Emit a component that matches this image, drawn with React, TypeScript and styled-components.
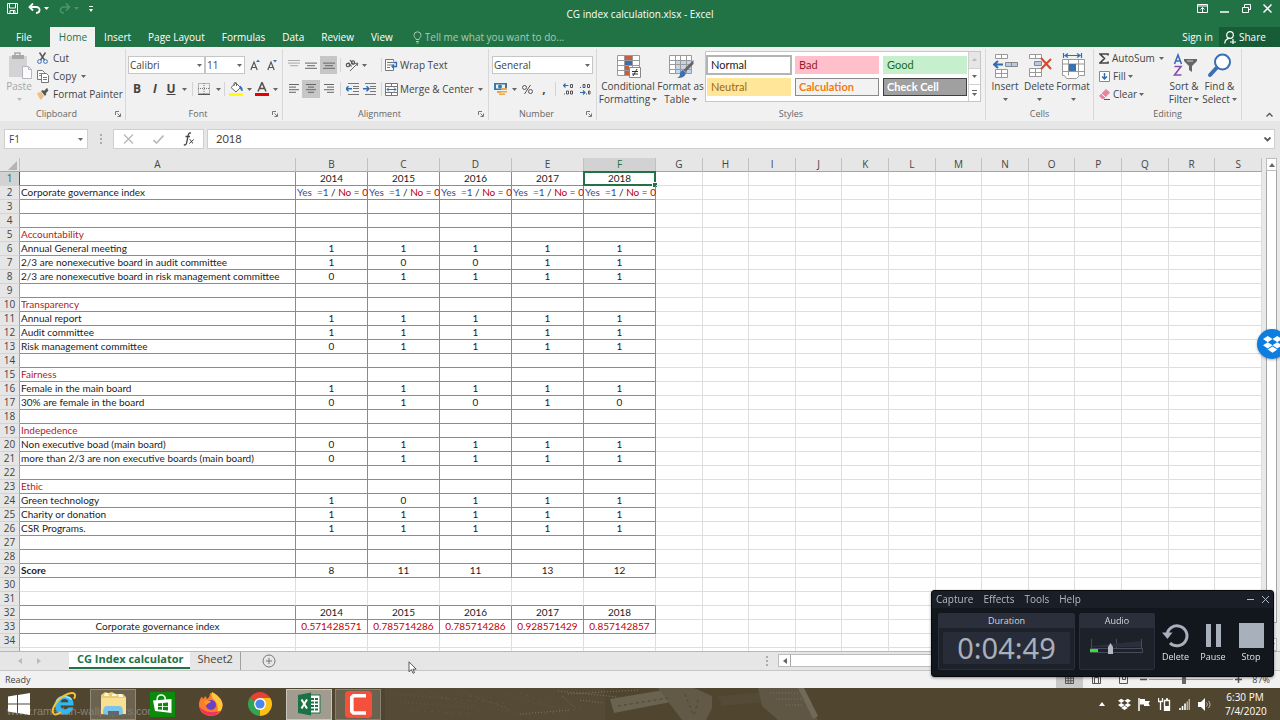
import React from "react";
import styled, { createGlobalStyle, css } from "styled-components";

const ui = `"Open Sans", "Noto Sans", sans-serif`;
const sheetFont = `Lato, "Open Sans", sans-serif`;
const green = "#217346";

const Global = createGlobalStyle`
  * { box-sizing: border-box; }
  body { margin: 0; overflow: hidden; font-family: ${ui}; font-size: 10px; color: #444; background: #e6e6e6; }
  button, input, select { font: inherit; color: inherit; margin: 0; }
  button { border: 0; background: none; padding: 0; white-space: nowrap; }
  a { color: inherit; text-decoration: none; }
  svg { display: block; flex: none; }
`;

const Page = styled.div`
  position: relative;
  display: flex;
  flex-direction: column;
  height: 100vh;
  overflow: hidden;
`;

/* ---------- title bar ---------- */
const TitleBar = styled.header`
  display: grid;
  grid-template-columns: 1fr auto 1fr;
  height: 27px;
  background: ${green};
  color: #fff;
`;
const QuickAccess = styled.div`
  display: flex;
  align-items: center;
  gap: 10px;
  height: 17px;
  padding-left: 6px;
`;
const SplitButton = styled.div`
  display: flex;
  gap: 3px;
`;
const Title = styled.h1`
  margin: 0;
  font-size: 10px;
  font-weight: 400;
  line-height: 28px;
`;
const WindowButtons = styled.div`
  display: flex;
  justify-content: flex-end;
  align-items: center;
  height: 17px;
  padding-right: 2px;
`;
const BarButton = styled.button<{ $w: number }>`
  display: flex;
  align-items: center;
  justify-content: center;
  width: ${(p) => p.$w}px;
  height: 17px;
`;

/* ---------- tabs ---------- */
const Tabs = styled.nav`
  display: flex;
  height: 20px;
  padding-left: 7px;
  background: ${green};
  color: #fff;
  line-height: 20px;
`;
const Tab = styled.a<{ $active?: boolean; $file?: boolean }>`
  padding: 0 8px 0 9px;
  white-space: nowrap;
  ${(p) => p.$file && css`margin-right: 10px;`}
  ${(p) => p.$active && css`background: #f1f1f1; color: ${green};`}
`;
const TellMe = styled.label`
  display: flex;
  align-items: center;
  gap: 3px;
  flex: 1;
  padding-left: 12px;
  color: #a5cbb4;
  input {
    width: 200px;
    border: 0;
    padding: 0;
    background: none;
    outline: 0;
    line-height: 18px;
  }
  input::placeholder { color: #a5cbb4; opacity: 1; }
`;
const SignIn = styled.a`
  padding-right: 6px;
`;
const Share = styled.button`
  display: flex;
  align-items: center;
  gap: 2px;
  width: 61px;
  padding-left: 5px;
  background: #185c37;
  color: #fff;
`;

/* ---------- ribbon ---------- */
const Ribbon = styled.section`
  display: flex;
  height: 74px;
  padding-bottom: 1px;
  background: #f1f1f1;
`;
const GroupBox = styled.div<{ $w: number }>`
  display: flex;
  flex-direction: column;
  flex: none;
  width: ${(p) => p.$w}px;
  margin-top: 2px;
  border-right: 1px solid #d8d8d8;
`;
const GroupBody = styled.div<{ $left: number }>`
  display: flex;
  align-items: flex-start;
  height: 58px;
  padding-left: ${(p) => p.$left}px;
`;
const GroupLabel = styled.div`
  display: flex;
  align-items: center;
  height: 13px;
  font-size: 9px;
  line-height: 13px;
  color: #666;
  span { flex: 1; text-align: center; }
  button { width: 12px; padding-left: 2px; }
`;
const Col = styled.div`
  display: flex;
  flex-direction: column;
  gap: 6px;
  padding-top: 7px;
`;
const List = styled.div<{ $w?: number }>`
  display: flex;
  flex-direction: column;
  ${(p) => p.$w && css`width: ${p.$w}px;`}
`;
const ToolRow = styled.div`
  display: flex;
  align-items: center;
  height: 18px;
`;
const Tool = styled.button<{ $w?: number; $on?: boolean }>`
  display: flex;
  align-items: center;
  justify-content: center;
  height: 18px;
  ${(p) => p.$w && css`width: ${p.$w}px;`}
  ${(p) => p.$on && css`background: #c6c6c6;`}
`;
const Glyph = styled.b`
  font-size: 12px;
  line-height: 16px;
`;
const Sep = styled.i<{ $w: number }>`
  width: ${(p) => p.$w}px;
  height: 14px;
  background: linear-gradient(#d4d4d4, #d4d4d4) center / 1px 100% no-repeat;
`;
const TextTool = styled.button`
  display: flex;
  align-items: center;
  gap: 1px;
  height: 18px;
`;
const Slot = styled.span<{ $w: number }>`
  display: flex;
  justify-content: center;
  width: ${(p) => p.$w}px;
`;
const Big = styled.button<{ $w: number; $dim?: boolean }>`
  display: flex;
  flex-direction: column;
  align-items: center;
  flex: none;
  width: ${(p) => p.$w}px;
  padding-top: 3px;
  line-height: 13px;
  ${(p) => p.$dim && css`color: #a6a6a6;`}
  > svg:first-child { margin-bottom: 1px; }
`;
const BigLine = styled.span`
  display: flex;
  align-items: center;
  gap: 2px;
  height: 13px;
`;
const SelectBox = styled.span<{ $w: number }>`
  display: grid;
  align-items: center;
  width: ${(p) => p.$w}px;
  > * { grid-area: 1 / 1; }
  > svg { justify-self: end; margin-right: 3px; pointer-events: none; }
  select {
    appearance: none;
    width: 100%;
    height: 18px;
    padding: 0 1px;
    border: 1px solid #c6c6c6;
    border-radius: 0;
    background: #fff;
  }
`;
const Gallery = styled.div`
  display: flex;
  justify-content: space-between;
  width: 276px;
  height: 51px;
  margin-top: 2px;
  border: 1px solid #c6c6c6;
  background: #fff;
`;
const Swatches = styled.div`
  display: grid;
  grid-template-columns: repeat(3, 84px);
  grid-auto-rows: 18px;
  gap: 4px;
  padding: 4px 1px;
`;
const Swatch = styled.button<{ $bg: string; $fg: string; $edge?: string; $bold?: boolean; $picked?: boolean }>`
  padding-left: 3px;
  text-align: left;
  font-family: ${sheetFont};
  font-size: 11px;
  line-height: 16px;
  font-weight: ${(p) => (p.$bold ? 700 : 400)};
  background: ${(p) => p.$bg};
  color: ${(p) => p.$fg};
  border: 1px solid ${(p) => p.$edge ?? p.$bg};
  ${(p) => p.$picked && css`outline: 1px solid #b4b4b4; border-color: #b4b4b4;`}
`;
const GalleryScroll = styled.div`
  display: flex;
  flex-direction: column;
  width: 12px;
  border-left: 1px solid #d0d0d0;
  button {
    display: flex;
    align-items: center;
    justify-content: center;
    flex: 1;
  }
  button + button { border-top: 1px solid #d0d0d0; }
  button:first-child { background: #e6e6e6; }
`;
const Collapse = styled.button`
  align-self: flex-end;
  margin: 0 7px 3px auto;
`;

/* ---------- formula bar ---------- */
const FormulaBar = styled.section`
  display: flex;
  align-items: flex-start;
  height: 37px;
  padding: 8px 5px 0 4px;
  background: #e6e6e6;
  font-size: 11px;
`;
const Box = styled.div<{ $w?: number }>`
  display: flex;
  align-items: center;
  height: 20px;
  background: #fff;
  border: 1px solid #cfcfcf;
  ${(p) => (p.$w ? css`flex: none; width: ${p.$w}px;` : css`flex: 1;`)}
  input {
    flex: 1;
    min-width: 0;
    border: 0;
    outline: 0;
    padding: 0;
    background: none;
    line-height: 16px;
  }
`;
const NameBox = styled(Box)`
  padding: 0 4px;
  font-size: 10px;
`;
const FormulaInput = styled(Box)`
  margin-left: 3px;
  padding: 0 3px 0 8px;
  font-family: ${sheetFont};
`;
const Grip = styled.span<{ $w: number }>`
  display: flex;
  justify-content: center;
  align-items: center;
  width: ${(p) => p.$w}px;
  height: 20px;
`;

/* ---------- sheet ---------- */
const SheetArea = styled.main`
  display: flex;
  flex: 1 1 0;
  min-height: 0;
  overflow: hidden;
`;
const Scroller = styled.div`
  flex: 1;
  overflow: hidden;
  background: #fff;
`;
const Grid = styled.table`
  width: 100%;
  table-layout: fixed;
  border-collapse: separate;
  border-spacing: 0;
  font-family: ${sheetFont};
  font-size: 10px;
  color: #1c1c1c;
`;
const ColHead = styled.th<{ $on?: boolean }>`
  height: 14px;
  padding: 0;
  font-family: ${ui};
  font-weight: 400;
  line-height: 13px;
  color: ${(p) => (p.$on ? green : "#444")};
  background: ${(p) => (p.$on ? "#d2d2d2" : "#e6e6e6")};
  border-right: 1px solid #c0c0c0;
  border-bottom: 1px solid #a6a6a6;
  svg { margin: 2px 0 0 8px; }
`;
const RowHead = styled.th<{ $on?: boolean }>`
  height: 14px;
  padding: 0;
  font-family: ${ui};
  font-weight: 400;
  line-height: 13px;
  color: ${(p) => (p.$on ? green : "#444")};
  background: ${(p) => (p.$on ? "#d2d2d2" : "#e6e6e6")};
  border-right: 1px solid ${(p) => (p.$on ? green : "#a0a0a0")};
  border-bottom: 1px solid #d4d4d4;
`;
const Cell = styled.td<{ $right?: boolean; $bottom?: boolean; $left?: boolean; $fg?: string; $bold?: boolean; $on?: boolean }>`
  position: relative;
  height: 14px;
  padding: 0 1px;
  line-height: 13px;
  white-space: pre;
  text-align: ${(p) => (p.$left ? "left" : "center")};
  font-weight: ${(p) => (p.$bold ? 700 : 400)};
  color: ${(p) => p.$fg ?? "inherit"};
  border-right: 1px solid ${(p) => (p.$right ? "#8c8c8c" : "#dedede")};
  border-bottom: 1px solid ${(p) => (p.$bottom ? "#8c8c8c" : "#dedede")};
  ${(p) =>
    p.$on &&
    css`
      &::before {
        content: "";
        position: absolute;
        inset: -1px;
        border: 2px solid ${green};
      }
      &::after {
        content: "";
        position: absolute;
        right: -2px;
        bottom: -2px;
        width: 4px;
        height: 4px;
        background: ${green};
        border: solid #fff;
        border-width: 1px 0 0 1px;
      }
    `}
`;
const Blue = styled.span`color: #2f4f94;`;
const Red = styled.span`color: #c00000;`;
const VScroll = styled.div`
  display: flex;
  flex-direction: column;
  width: 18px;
  padding: 0 3px 0 4px;
  background: #e9e9e9;
  button {
    display: flex;
    align-items: center;
    justify-content: center;
    height: 13px;
    background: #fff;
    border: 1px solid #bcbcbc;
  }
`;
const VThumb = styled.div`
  flex: 1;
  margin-bottom: 15px;
  background: #fff;
  border: 1px solid #a6a6a6;
  border-top: 0;
`;

/* ---------- sheet tabs and status ---------- */
const SheetTabs = styled.nav`
  display: flex;
  flex: none;
  height: 20px;
  background: #e6e6e6;
  border-top: 1px solid #b8b8b8;
  border-bottom: 1px solid #c6c6c6;
  font-size: 11px;
  line-height: 13px;
`;
const SheetNav = styled.div`
  display: flex;
  align-items: center;
  justify-content: center;
  gap: 15px;
  width: 69px;
  height: 17px;
  padding-right: 10px;
`;
const SheetTab = styled.a<{ $active?: boolean }>`
  padding: 0 6px 0 8px;
  height: 17px;
  ${(p) =>
    p.$active &&
    css`
      background: #fff;
      color: ${green};
      font-weight: 700;
      border-bottom: 2px solid ${green};
    `}
`;
const HScroll = styled.div`
  display: flex;
  flex: 0 0 484px;
  height: 13px;
  margin: 2px 18px 0 0;
  background: #fff;
  border: 1px solid #bcbcbc;
  button {
    display: flex;
    align-items: center;
    justify-content: center;
    width: 12px;
    border-right: 1px solid #a6a6a6;
  }
`;
const TabsEnd = styled.div`
  display: flex;
  align-items: center;
  justify-content: space-between;
  flex: 1;
  height: 18px;
  border-left: 1px solid #a0a0a0;
  margin-left: 1px;
  padding: 0 5px 0 21px;
`;
const Status = styled.footer`
  display: flex;
  align-items: center;
  flex: none;
  height: 17px;
  padding: 0 10px 0 5px;
  background: #f1f1f1;
  font-size: 9px;
  > span:first-child { flex: 1; }
`;
const ViewButton = styled.button<{ $on?: boolean }>`
  display: flex;
  align-items: center;
  justify-content: center;
  width: 27px;
  height: 17px;
  background: ${(p) => (p.$on ? "#c9c9c9" : "transparent")};
`;
const Zoom = styled.input`
  appearance: none;
  width: 84px;
  height: 1px;
  background: #a6a6a6;
  &::-webkit-slider-thumb {
    appearance: none;
    width: 4px;
    height: 9px;
    background: #666;
  }
`;
const ZoomLevel = styled.span`
  padding-left: 9px;
`;

/* ---------- taskbar ---------- */
const Taskbar = styled.section`
  position: relative;
  display: flex;
  flex: none;
  align-items: center;
  height: 32px;
  background: #50462f;
  color: #fff;
  overflow: hidden;
`;
const Wallpaper = styled.svg`
  position: absolute;
  left: 340px;
  top: 0;
`;
const Watermark = styled.span`
  position: absolute;
  left: 7px;
  bottom: 2px;
  font-family: "Liberation Sans", sans-serif;
  font-size: 11px;
  line-height: 13px;
  color: #8b8373;
`;
const Apps = styled.div`
  position: relative;
  display: flex;
  gap: 3px;
  flex: 1;
`;
const AppButton = styled.button<{ $state?: "open" | "front" | "faint"; $narrow?: boolean }>`
  display: flex;
  align-items: center;
  justify-content: center;
  width: ${(p) => (p.$narrow ? 38 : 46)}px;
  height: 31px;
  ${(p) => p.$state === "open" && css`background: #7d766699; box-shadow: inset 0 0 0 1px #8f897c;`}
  ${(p) => p.$state === "front" && css`background: #a19c8f; box-shadow: inset 0 0 0 1px #c9c5bc;`}
  ${(p) => p.$state === "faint" && css`background: #6a624f; box-shadow: inset 0 0 0 1px #858071;`}
`;
const Tray = styled.div`
  position: relative;
  display: flex;
  align-items: center;
  padding-right: 15px;
`;
const TrayButton = styled.button<{ $w: number }>`
  display: flex;
  justify-content: center;
  width: ${(p) => p.$w}px;
`;
const Clock = styled.time`
  width: 40px;
  margin-left: 10px;
  font-size: 10px;
  line-height: 14px;
  text-align: center;
  white-space: nowrap;
`;

/* ---------- floating recorder ---------- */
const Recorder = styled.aside`
  position: fixed;
  right: 6px;
  bottom: 43px;
  width: 343px;
  height: 87px;
  border-radius: 3px;
  border: 1px solid #05070a;
  background: linear-gradient(#1a1e27 0 17px, #12161d 17px);
  box-shadow: 0 1px 3px #0006;
  color: #b4bac3;
`;
const RecMenu = styled.div`
  display: flex;
  align-items: center;
  gap: 10px;
  height: 16px;
  padding: 0 4px;
  font-size: 10px;
  line-height: 16px;
`;
const RecWin = styled.div`
  display: flex;
  align-items: center;
  gap: 8px;
  margin-left: auto;
`;
const RecBody = styled.div`
  display: flex;
  padding: 6px 0 0 6px;
`;
const Panel = styled.div<{ $w: number }>`
  width: ${(p) => p.$w}px;
  height: 57px;
  margin-right: 4px;
  background: #1c212a;
  border: 1px solid #2a303b;
  border-radius: 2px;
  h2 {
    margin: 0;
    font-size: 9px;
    font-weight: 400;
    line-height: 14px;
    text-align: center;
    color: #d3d7dc;
    background: #2a2f3b;
  }
  > svg { margin: 11px auto 0; }
`;
const Lcd = styled.div`
  margin: 4px 4px 0;
  height: 32px;
  background: #272c38;
  border-radius: 2px;
  font-size: 29px;
  line-height: 31px;
  text-align: center;
  color: #a7b0bb;
  font-family: "Noto Sans", sans-serif;
`;
const RecButton = styled.button<{ $w: number }>`
  display: flex;
  flex-direction: column;
  align-items: center;
  width: ${(p) => p.$w}px;
  padding-top: 9px;
  font-size: 9px;
  line-height: 12px;
  color: #dfe2e6;
  svg { margin-bottom: 2px; }
`;
const DropboxBadge = styled.button`
  position: fixed;
  right: -7px;
  top: 329px;
  display: flex;
  align-items: center;
  justify-content: center;
  width: 30px;
  height: 30px;
  border-radius: 50%;
  background: #0d7de0;
  box-shadow: 0 1px 3px #0005;
`;
const Pointer = styled.svg`
  position: fixed;
  left: 408px;
  bottom: 46px;
`;

/* ---------- icons ---------- */
type IconProps = { w: number; h: number; box?: string; children: React.ReactNode };
const Icon = ({ w, h, box, children }: IconProps) => (
  <svg width={w} height={h} viewBox={box ?? `0 0 ${w} ${h}`} fill="none" aria-hidden="true">
    {children}
  </svg>
);
const Caret = ({ c = "#666" }: { c?: string }) => (
  <Icon w={5} h={3}><path d="M0 0h5L2.500 3z" fill={c} /></Icon>
);
const Lines = ({ rows }: { rows: [number, number, string?][] }) => (
  <Icon w={12} h={12}>
    {rows.map(([x, w, c], i) => (
      <rect key={i} x={x} y={1 + i * 2.6} width={w} height="1" fill={c ?? "#666"} />
    ))}
  </Icon>
);
const Launcher = () => (
  <button aria-label="More options">
    <Icon w={6} h={6}><path d="M0.500 4V0.500H4M2.500 2.500L5 5M5.500 2.500V5.500H2.500" stroke="#777" /></Icon>
  </button>
);
const Dropbox = ({ s, c = "#fff" }: { s: number; c?: string }) => (
  <Icon w={s} h={s} box="0 0 20 20">
    <path d="M5 1l5 3.300-5 3.300L0 4.300zM15 1l5 3.300-5 3.300-5-3.300zM5 7.600l5 3.300-5 3.300-5-3.300zM15 7.600l5 3.300-5 3.300-5-3.300zM10 12l5 3.300-5 3.300-5-3.300z" fill={c} />
  </Icon>
);
const PasteIcon = () => (
  <Icon w={26} h={27}>
    <path d="M3 4h18v21H3z" fill="#d3d3d5" />
    <path d="M6 3h12v4H6z" fill="#a8a8aa" />
    <path d="M9 1h5v3H9z" stroke="#a8a8aa" strokeWidth="1.500" />
    <path d="M16.500 14.500h6l3 3v9h-9z" fill="#fbfbfd" stroke="#b5b5bb" />
    <path d="M22.500 14.500v3h3" stroke="#b5b5bb" />
  </Icon>
);
const CutIcon = () => (
  <Icon w={11} h={12}>
    <path d="M2.500 0.500L7.500 8M8.500 0.500L3.500 8" stroke="#555" strokeWidth="1.400" />
    <circle cx="2.500" cy="9.500" r="1.900" stroke="#3b6fb6" />
    <circle cx="8.500" cy="9.500" r="1.900" stroke="#3b6fb6" />
  </Icon>
);
const CopyIcon = () => (
  <Icon w={12} h={13}>
    <path d="M.5.500h5l2 2v7h-7z" fill="#fff" stroke="#777" />
    <path d="M2 3.500h3M2 5.500h3" stroke="#6b93c7" />
    <path d="M4.500 3.500h5l2 2v7h-7z" fill="#fff" stroke="#777" />
    <path d="M6 7.500h4M6 9.500h4" stroke="#4a7fc1" />
  </Icon>
);
const PainterIcon = () => (
  <Icon w={12} h={12}>
    <path d="M0 5l4-1 3 4-3 4C2 10 1 8 0 5z" fill="#ecc183" />
    <path d="M4 3l4 5 1.500-2L6 2z" fill="#555" />
    <path d="M7 4l3.500-3.500M8 5l3-3" stroke="#555" strokeWidth="1.500" />
  </Icon>
);
const BordersIcon = () => (
  <Icon w={12} h={12}>
    <path d="M.5.500h11v10H.5zM6 0v11M0 5.500h12" stroke="#777" strokeDasharray="1 1" />
    <path d="M0 11.500h12" stroke="#555" />
  </Icon>
);
const FillColorIcon = () => (
  <Icon w={14} h={14}>
    <path d="M2 5.500L7 1l4.500 4.500L7 10z" fill="#fff" stroke="#666" />
    <path d="M5 4V1.500C5 0 7.500 0 7.500 1.500V4" stroke="#666" />
    <path d="M11 4c2 1 2.500 3 2 5-1-1-1-2-2-3z" fill="#3b6fb6" stroke="#3b6fb6" />
    <path d="M0 11h14v3H0z" fill="#ff0" />
  </Icon>
);
const FontColorIcon = () => (
  <Icon w={14} h={14}>
    <path d="M3 9.500L7 .5l4 9M4.500 6.500h5" stroke="#555" strokeWidth="1.600" />
    <path d="M0 11h14v3H0z" fill="#e80000" />
  </Icon>
);
const GrowA = ({ down }: { down?: boolean }) => (
  <Icon w={11} h={12}>
    <path d="M.8 11L4 3l3.200 8M2 8.500h4" stroke="#555" strokeWidth="1.200" />
    <path d={down ? "M6 1h4L8 3.500z" : "M6 3h4L8 .5z"} fill="#3b6fb6" />
  </Icon>
);
const OrientIcon = () => (
  <Icon w={14} h={13}>
    <path d="M5 12l7.500-7.500M12.800 4l-3 .6M12.800 4l-.6 3" stroke="#666" />
    <circle cx="3" cy="6" r="1.700" stroke="#555" strokeWidth="1.200" />
    <path d="M3.500 3.500l3 4M5 1l3.500 4.500" stroke="#555" strokeWidth="1.200" />
    <circle cx="8" cy="3.500" r="1.600" stroke="#555" strokeWidth="1.200" />
  </Icon>
);
const WrapIcon = () => (
  <Icon w={13} h={13}>
    <path d="M.5.500h8v2M.5.500v11h8v-3" fill="#fff" stroke="#777" />
    <path d="M2 3.500h7M2 6h6M2 8.500h3" stroke="#777" />
    <path d="M9 3.500h2.500v4H7M9 5.500l-2 2 2 2" stroke="#2f6db5" strokeWidth="1.300" />
  </Icon>
);
const MergeIcon = () => (
  <Icon w={13} h={13}>
    <path d="M.5.500h12v12H.5zM.5 3.500h12M.5 9.500h12M6.500 0v3.500M6.500 9.500V13" fill="#fff" stroke="#777" />
    <path d="M2 6.500h9M4 4.500l-2 2 2 2M9 4.500l2 2-2 2" stroke="#2f6db5" />
  </Icon>
);
const IndentIcon = ({ out }: { out?: boolean }) => (
  <Icon w={13} h={12}>
    <path d="M2 .5h11M7 3.500h6M7 5.500h6M7 8.500h6M2 11.500h11" stroke="#777" />
    <path d={out ? "M0 5.800h6M2.500 3.300L0 5.800l2.500 2.500" : "M0 5.800h6M3.500 3.300L6 5.800 3.500 8.300"} stroke="#2f6db5" strokeWidth="1.500" />
  </Icon>
);
const MoneyIcon = () => (
  <Icon w={14} h={12}>
    <path d="M0 0h13v7H0z" fill="#3b77a8" />
    <path d="M2 1.500h9v4H2z" fill="#e8f1f7" />
    <circle cx="6" cy="3.500" r="2" fill="#3b77a8" />
    <path d="M7 5h6v2H7zM7 8h6v1.500H7zM3 8h4v2H3zM5 10.500h6V12H5z" fill="#e9a64c" />
  </Icon>
);
const DecimalIcon = ({ less }: { less?: boolean }) => (
  <Icon w={11} h={12}>
    {less ? (
      <>
        <path d="M0 4.500h1M3 1.500h2v3H3zM7.500 1.500h2v3h-2zM6 11h1M8.500 8h1.500v3H8.500z" stroke="#555" />
        <path d="M0 9.500h5M3 7.500l2 2-2 2" stroke="#2f6db5" strokeWidth="1.200" />
      </>
    ) : (
      <>
        <path d="M7.500 1.500h2v3h-2zM1 11h1M3.500 8h2v3h-2zM7.500 8h2v3h-2z" stroke="#555" />
        <path d="M0 2.500h5.500M2.500.5l-2 2 2 2" stroke="#2f6db5" strokeWidth="1.200" />
      </>
    )}
  </Icon>
);
const CondIcon = () => (
  <Icon w={27} h={27}>
    <path d="M2.500 3.500h22v20h-22zM2 8.500h23M2 13.500h23M2 18.500h23M9.500 3v21M17.500 3v21" fill="#fff" stroke="#9a9a9a" />
    <path d="M10 4h4v4h-4zM10 14h4v4h-4zM10 19h4v4h-4z" fill="#cf5b3c" />
    <path d="M13 4h4v4h-4z" fill="#cf5b3c" />
    <path d="M10 9h7v4h-7z" fill="#3a70b2" />
    <path d="M14.500 15.500h11v10h-11z" fill="#fff" stroke="#888" />
    <path d="M17 19.500h6M17 22h6M22 17l-4 7" stroke="#333" />
  </Icon>
);
const TableIcon = () => (
  <Icon w={27} h={27}>
    <path d="M2.500 3.500h22v18h-22z" fill="#fff" stroke="#9a9a9a" />
    <path d="M8 8h16v13H8z" fill="#c4d4ea" />
    <path d="M2 8.500h23M2 12.500h23M2 17.500h23M8.500 3v19M13.500 3v19M19.500 3v19" stroke="#9a9a9a" />
    <path d="M26.500 8v4l-8 8-2-2z" fill="#666" />
    <path d="M16 18l3 3c-1 4-4 5-9 5 2-1 3-2 3-4s1-3 3-4z" fill="#3a70b2" />
  </Icon>
);
const InsertIcon = () => (
  <Icon w={25} h={27}>
    <path d="M2.500 2.500h12v4h-12zM8.500 2.500v4M2.500 17.500h12v8h-12zM2.500 21.500h12M8.500 17.500v8" fill="#fff" stroke="#999" />
    <path d="M12.500 10.500h12v4h-12zM18.500 10.500v4" fill="#b9cbe4" stroke="#888" />
    <path d="M1 12.500h9M5 9l-4 3.500L5 16" stroke="#2f6db5" strokeWidth="2" />
  </Icon>
);
const DeleteIcon = () => (
  <Icon w={25} h={27}>
    <path d="M2.500 2.500h12v4h-12zM8.500 2.500v4M2.500 16.500h12v8h-12zM2.500 20.500h12M8.500 16.500v8" fill="#fff" stroke="#999" />
    <path d="M7.500 9.500h7v4h-7z" fill="#b9cbe4" stroke="#888" />
    <path d="M14 6l10 11M24 7L14 17" stroke="#cf4b2c" strokeWidth="2" />
  </Icon>
);
const FormatIcon = () => (
  <Icon w={25} h={27}>
    <path d="M2.500 1v5M20.500 1v5M4 3.500h15M7 1.500l-3 2 3 2M16 1.500l3 2-3 2" stroke="#2f6db5" strokeWidth="1.200" />
    <path d="M1.500 7.500h22v16h-5l-3 3H5.500l-2-3h-2zM1.500 12h22M1.500 19.500h22M7.500 7.500v16M17.500 7.500v16" fill="#fff" stroke="#999" />
    <path d="M8 12h7v7H8z" fill="#3a70b2" />
  </Icon>
);
const SigmaIcon = () => (
  <Icon w={10} h={11}><path d="M9 2.500V1H1l4.500 4.500L1 10h8V8.500" stroke="#444" strokeWidth="1.600" /></Icon>
);
const FillIcon = () => (
  <Icon w={11} h={11}>
    <path d="M.5.500h10v10H.5z" fill="#fff" stroke="#888" />
    <path d="M5.500 2v6M3 5.500L5.500 8 8 5.500" stroke="#2f6db5" strokeWidth="1.500" />
  </Icon>
);
const EraserIcon = () => (
  <Icon w={12} h={11}>
    <path d="M0 7l7-7 4 3.500-6 6.500H3z" fill="#e8849b" />
    <path d="M2.500 4.800l4 3.500" stroke="#fff" />
    <path d="M5 10.500h6" stroke="#555" />
  </Icon>
);
const SortIcon = () => (
  <Icon w={25} h={27}>
    <path d="M2.500 12L6 3l3.500 9M3.500 9h5" stroke="#3a6db5" strokeWidth="1.600" />
    <path d="M2.500 14.500h6.500L2.500 23H9.500" stroke="#8a4bb0" strokeWidth="1.600" />
    <path d="M12 7h13v2l-5 5v6l-3-2v-4l-5-5z" fill="#666" />
    <path d="M15 9h6" stroke="#ccc" />
  </Icon>
);
const FindIcon = () => (
  <Icon w={25} h={27}>
    <path d="M9.500 16L3 23" stroke="#3a70b2" strokeWidth="4" strokeLinecap="round" />
    <circle cx="15.500" cy="10" r="7.500" fill="#fff" stroke="#3a70b2" strokeWidth="2" />
  </Icon>
);

/* ---------- taskbar drawings ---------- */
const WindowsLogo = () => (
  <Icon w={24} h={24}><path d="M1 4.500L10 3v8.500H1zM11 2.900L23 1v10.500H11zM1 12.500h9V21l-9-1.500zM11 12.500h12V23l-12-1.900z" fill="#fff" /></Icon>
);
const IELogo = () => (
  <Icon w={26} h={26}>
    <path d="M22.500 14.500H9.500c.3 2.500 2 3.800 4.300 3.800 1.800 0 3-.7 3.600-1.800h5C21 20.800 17.800 23.500 13.500 23.500 7.500 23.500 4 19.500 4 14 4 8.300 8 4.500 13.500 4.500c6 0 9.600 4 9 10zM9.500 11.200h8c-.2-2-1.700-3.300-4-3.300s-3.700 1.300-4 3.300z" fill="#35b6ee" />
    <path d="M5 12c1-4 4.500-6.300 8.500-6.300 3 0 5.500 1.200 7 3" stroke="#a8e4fb" strokeWidth="1.200" />
    <path d="M3 23c-3-2.500-.5-9 5-14.500C14 3 21.500.5 23.500 2.800c1 1.200.5 3.200-.5 5" stroke="#f2c230" strokeWidth="2" />
    <path d="M3 23c1.500 1 4.500-.2 7-2" stroke="#f2c230" strokeWidth="2" />
  </Icon>
);
const ExplorerLogo = () => (
  <Icon w={28} h={26}>
    <path d="M2 4l4-3 3 1 4-1 4 2h7l3 3v17H2z" fill="#eecb6b" />
    <path d="M6 2h3l1 3H5zM13 3h4l1 2h-5zM19 3h4l1 3h-4z" fill="#f7f7f0" />
    <path d="M2 7h25v16H2z" fill="#f8df92" />
    <path d="M4 23c0-6 1-8 4-8h12c3 0 4 2 4 8l-4 1v-4H9v4z" fill="#7cc4ea" />
    <path d="M9 20h11v5H9z" fill="#5a6a70" />
  </Icon>
);
const StoreLogo = () => (
  <Icon w={25} h={25}>
    <path d="M0 0h25v25H0z" fill="#0b8a0b" />
    <path d="M3 8.500L21.500 7v14L5 19z" fill="#fff" />
    <path d="M7 8.500C6.500 4 9.500 2.500 12 3s3.500 2 3.200 5" stroke="#fff" strokeWidth="1.500" />
    <path d="M8 11.500l4-.4v3H8zM13 11l5-.4V14h-5zM8 14.800h4v3l-4-.4zM13 14.800h5v3.700l-5-.5z" fill="#0b8a0b" />
  </Icon>
);
const FirefoxLogo = () => (
  <Icon w={26} h={26}>
    <path d="M13 25C6 25 1 20 1 13.500c0-3 1-6 3-8L5 8l2.500-3L9 8c2-1 3-4 3-6 5 1 8 3 9 6l1-1c2 3 3 5.500 2.500 8C24 21 19 25 13 25z" fill="#ff7a2b" />
    <path d="M14 1c5 2 11 8 10.500 14-.4 4-3 7-6 8.500C22 17 18 10 15 8c-1.500-2-2-4.500-1-7z" fill="#ffc83a" />
    <path d="M1.500 16c1.500 5 6 8.500 11 8.800 4 .2 8-2 10-5-5 2-14 3-21-3.800z" fill="#f2335b" />
    <circle cx="13" cy="14" r="5" fill="#6a42c8" />
    <path d="M6 10c3-1.500 5 0 7 .5-1 2-4 1.500-4 3.500-2-.5-3-2-3-4z" fill="#ff9a30" />
  </Icon>
);
const ChromeLogo = () => (
  <Icon w={26} h={26} box="0 0 48 48">
    <path d="M24 24L4.900 13A22 22 0 0 1 43 13z" fill="#e94235" />
    <path d="M24 24l19.100-11A22 22 0 0 1 24 46z" fill="#fbc116" />
    <path d="M24 24v22A22 22 0 0 1 4.900 13z" fill="#34a353" />
    <path d="M24 13h19L33.500 29.500zM24 24L33.500 29.500 24 46z" fill="#fbc116" />
    <path d="M4.900 13l9.600 16.500L24 24zM24 35l-9.500-5.500L24 46z" fill="#34a353" />
    <circle cx="24" cy="24" r="11" fill="#fff" />
    <circle cx="24" cy="24" r="8.500" fill="#4a86ee" />
  </Icon>
);
const ExcelLogo = () => (
  <Icon w={26} h={26}>
    <path d="M13 4h11v18H13z" fill="#fff" stroke="#1d7245" />
    <path d="M15 7h3v2h-3zM19 7h3v2h-3zM15 10.500h3v2h-3zM19 10.500h3v2h-3zM15 14h3v2h-3zM19 14h3v2h-3zM15 17.500h3v2h-3zM19 17.500h3v2h-3z" fill="#1d7245" />
    <path d="M2 4l13-2.500v23L2 22z" fill="#1d7245" />
    <path d="M5.500 8.500l5.500 9M11 8.500l-5.500 9" stroke="#fff" strokeWidth="2" />
  </Icon>
);
const CamtasiaLogo = () => (
  <Icon w={27} h={27}>
    <rect x="0" y="0" width="27" height="27" rx="4" fill="#f4503c" />
    <path d="M21 4.800H8.500L6.800 6.500v13.800L8.500 22H21" stroke="#fff" strokeWidth="3.600" />
  </Icon>
);

/* ---------- data ---------- */
type Row = { a?: string; kind?: "head" | "bold" | "mid"; v?: string[]; tone?: "yesno" | "red" };
const years = ["2014", "2015", "2016", "2017", "2018"];
const n = (s: string) => s.split(" ");
const rows: Row[] = [
  { v: years },
  { a: "Corporate governance index", tone: "yesno" },
  {},
  {},
  { a: "Accountability", kind: "head" },
  { a: "Annual General meeting", v: n("1 1 1 1 1") },
  { a: "2/3 are nonexecutive board in audit committee", v: n("1 0 0 1 1") },
  { a: "2/3 are nonexecutive board in risk management committee", v: n("0 1 1 1 1") },
  {},
  { a: "Transparency", kind: "head" },
  { a: "Annual report", v: n("1 1 1 1 1") },
  { a: "Audit committee", v: n("1 1 1 1 1") },
  { a: "Risk management committee", v: n("0 1 1 1 1") },
  {},
  { a: "Fairness", kind: "head" },
  { a: "Female in the main board", v: n("1 1 1 1 1") },
  { a: "30% are female in the board", v: n("0 1 0 1 0") },
  {},
  { a: "Indepedence", kind: "head" },
  { a: "Non executive boad (main board)", v: n("0 1 1 1 1") },
  { a: "more than 2/3 are non executive boards (main board)", v: n("0 1 1 1 1") },
  {},
  { a: "Ethic", kind: "head" },
  { a: "Green technology", v: n("1 0 1 1 1") },
  { a: "Charity or donation", v: n("1 1 1 1 1") },
  { a: "CSR Programs.", v: n("1 1 1 1 1") },
  {},
  {},
  { a: "Score", kind: "bold", v: n("8 11 11 13 12") },
  {},
  {},
  { v: years },
  { a: "Corporate governance index", kind: "mid", tone: "red", v: n("0.571428571 0.785714286 0.785714286 0.928571429 0.857142857") },
  {},
];
const restCols = "GHIJKLMNOPQRS".split("");

const WideCol = styled.col`width: 276px;`;
const YearCol = styled.col`width: 72px;`;
const HeadCol = styled.col`width: 20px;`;

const Group = ({ w, left, label, launcher, children }: { w: number; left: number; label: string; launcher?: boolean; children: React.ReactNode }) => (
  <GroupBox $w={w}>
    <GroupBody $left={left}>{children}</GroupBody>
    <GroupLabel><span>{label}</span>{launcher && <Launcher />}</GroupLabel>
  </GroupBox>
);

const Sheet = () => (
  <Grid>
    <colgroup>
      <HeadCol />
      <WideCol />
      {years.map((y) => <YearCol key={y} />)}
      {restCols.map((c) => <col key={c} />)}
    </colgroup>
    <thead>
      <tr>
        <ColHead><Icon w={9} h={9}><path d="M9 0v9H0z" fill="#b4b4b4" /></Icon></ColHead>
        {[..."ABCDEF", ...restCols].map((c) => <ColHead key={c} scope="col" $on={c === "F"}>{c}</ColHead>)}
      </tr>
    </thead>
    <tbody>
      {rows.map((r, i) => {
        const boxed = i < 29 || i === 31 || i === 32;
        const under = boxed || i === 30;
        return (
          <tr key={i}>
            <RowHead scope="row" $on={i === 0}>{i + 1}</RowHead>
            <Cell $left={r.kind !== "mid"} $right={boxed} $bottom={under} $bold={r.kind === "bold"} $fg={r.kind === "head" ? "#b3202a" : undefined}>{r.a}</Cell>
            {years.map((y, k) => (
              <Cell key={y} $right={boxed} $bottom={under} $on={i === 0 && k === 4} $fg={r.tone === "red" ? "#c00000" : undefined}>
                {r.tone === "yesno" ? <><Blue>Yes  =1</Blue> / <Red>No = 0</Red></> : r.v?.[k]}
              </Cell>
            ))}
            {restCols.map((c) => <Cell key={c} />)}
          </tr>
        );
      })}
      <tr>
        <RowHead />
        <Cell />
        {years.map((y) => <Cell key={y} />)}
        {restCols.map((c) => <Cell key={c} />)}
      </tr>
    </tbody>
  </Grid>
);

const RibbonBar = () => (
  <Ribbon>
    <Group w={126} left={5} label="Clipboard" launcher>
      <Big $w={28} $dim><PasteIcon /><BigLine>Paste</BigLine><BigLine><Caret c="#bbb" /></BigLine></Big>
      <List>
        <TextTool><Slot $w={19}><CutIcon /></Slot>Cut</TextTool>
        <TextTool><Slot $w={19}><CopyIcon /></Slot>Copy<Slot $w={12}><Caret /></Slot></TextTool>
        <TextTool><Slot $w={19}><PainterIcon /></Slot>Format Painter</TextTool>
      </List>
    </Group>
    <Group w={157} left={2} label="Font" launcher>
      <Col>
        <ToolRow>
          <SelectBox $w={77}><select aria-label="Font"><option>Calibri</option></select><Caret /></SelectBox>
          <SelectBox $w={40}><select aria-label="Font size"><option>11</option></select><Caret /></SelectBox>
          <Tool $w={20} aria-label="Increase font size"><GrowA /></Tool>
          <Tool $w={14} aria-label="Decrease font size"><GrowA down /></Tool>
        </ToolRow>
        <ToolRow>
          <Tool $w={18}><Glyph>B</Glyph></Tool>
          <Tool $w={18}><Glyph><i>I</i></Glyph></Tool>
          <Tool $w={14}><Glyph><u>U</u></Glyph></Tool>
          <Tool $w={12} aria-label="Underline styles"><Caret /></Tool>
          <Sep $w={4} />
          <Tool $w={20} aria-label="Borders"><BordersIcon /></Tool>
          <Tool $w={8} aria-label="Border styles"><Caret /></Tool>
          <Sep $w={4} />
          <Tool $w={20} aria-label="Fill color"><FillColorIcon /></Tool>
          <Tool $w={6} aria-label="Fill colors"><Caret /></Tool>
          <Tool $w={20} aria-label="Font color"><FontColorIcon /></Tool>
          <Tool $w={6} aria-label="Font colors"><Caret /></Tool>
        </ToolRow>
      </Col>
    </Group>
    <Group w={206} left={2} label="Alignment" launcher>
      <Col>
        <ToolRow>
          <Tool $w={17} aria-label="Top align"><Lines rows={[[0, 12, "#aaa"], [0, 12, "#aaa"], [2, 8, "#aaa"]]} /></Tool>
          <Tool $w={18} aria-label="Middle align"><Lines rows={[[0, 0], [0, 12], [2, 8], [0, 12]]} /></Tool>
          <Tool $w={17} $on aria-label="Bottom align"><Lines rows={[[0, 0], [0, 12], [2, 8], [0, 12]]} /></Tool>
          <Sep $w={6} />
          <Tool $w={18} aria-label="Orientation"><OrientIcon /></Tool>
          <Tool $w={6} aria-label="Orientations"><Caret /></Tool>
        </ToolRow>
        <ToolRow>
          <Tool $w={17} aria-label="Align left"><Lines rows={[[1, 10], [1, 7], [1, 10], [1, 7]]} /></Tool>
          <Tool $w={18} $on aria-label="Center"><Lines rows={[[1, 10], [3, 6], [1, 10], [3, 6]]} /></Tool>
          <Tool $w={17} aria-label="Align right"><Lines rows={[[1, 10], [4, 7], [1, 10], [4, 7]]} /></Tool>
          <Sep $w={6} />
          <Tool $w={18} aria-label="Decrease indent"><IndentIcon out /></Tool>
          <Tool $w={17} aria-label="Increase indent"><IndentIcon /></Tool>
        </ToolRow>
      </Col>
      <Col>
        <ToolRow><Sep $w={6} /><TextTool><Slot $w={15}><WrapIcon /></Slot>Wrap Text</TextTool></ToolRow>
        <ToolRow><Sep $w={6} /><TextTool><Slot $w={15}><MergeIcon /></Slot>Merge &amp; Center<Slot $w={12}><Caret /></Slot></TextTool></ToolRow>
      </Col>
    </Group>
    <Group w={108} left={3} label="Number" launcher>
      <Col>
        <ToolRow>
          <SelectBox $w={101}><select aria-label="Number format"><option>General</option></select><Caret /></SelectBox>
        </ToolRow>
        <ToolRow>
          <Tool $w={18} aria-label="Accounting format"><MoneyIcon /></Tool>
          <Tool $w={8} aria-label="Accounting formats"><Caret /></Tool>
          <Tool $w={18} aria-label="Percent style"><Icon w={11} h={9}><circle cx="2.500" cy="2.500" r="2" stroke="#555" /><circle cx="8.500" cy="6.500" r="2" stroke="#555" /><path d="M8.500 0L2.500 9" stroke="#555" /></Icon></Tool>
          <Tool $w={16}><Glyph>,</Glyph></Tool>
          <Sep $w={6} />
          <Tool $w={20} aria-label="Increase decimal"><DecimalIcon /></Tool>
          <Tool $w={15} aria-label="Decrease decimal"><DecimalIcon less /></Tool>
        </ToolRow>
      </Col>
    </Group>
    <Group w={389} left={3} label="Styles">
      <Big $w={56}><CondIcon /><BigLine>Conditional</BigLine><BigLine>Formatting<Caret /></BigLine></Big>
      <Big $w={49}><TableIcon /><BigLine>Format as</BigLine><BigLine>Table<Caret /></BigLine></Big>
      <Gallery>
        <Swatches>
          <Swatch $bg="#ffffff" $fg="#222" $picked>Normal</Swatch>
          <Swatch $bg="#ffc0cb" $fg="#9c1a2a">Bad</Swatch>
          <Swatch $bg="#c6efce" $fg="#1a6b22">Good</Swatch>
          <Swatch $bg="#ffe699" $fg="#9c6a10">Neutral</Swatch>
          <Swatch $bg="#f2f2f2" $fg="#f07d10" $edge="#8a8a8a" $bold>Calculation</Swatch>
          <Swatch $bg="#a0a0a0" $fg="#ffffff" $edge="#404040" $bold>Check Cell</Swatch>
        </Swatches>
        <GalleryScroll>
          <button aria-label="Previous styles"><Icon w={5} h={3}><path d="M0 3h5L2.500 0z" fill="#bbb" /></Icon></button>
          <button aria-label="Next styles"><Caret /></button>
          <button aria-label="All styles"><Icon w={5} h={6}><path d="M0 .5h5" stroke="#666" /><path d="M0 3h5L2.500 6z" fill="#666" /></Icon></button>
        </GalleryScroll>
      </Gallery>
    </Group>
    <Group w={108} left={2} label="Cells">
      <Big $w={34}><InsertIcon /><BigLine>Insert</BigLine><BigLine><Caret /></BigLine></Big>
      <Big $w={34}><DeleteIcon /><BigLine>Delete</BigLine><BigLine><Caret /></BigLine></Big>
      <Big $w={34}><FormatIcon /><BigLine>Format</BigLine><BigLine><Caret /></BigLine></Big>
    </Group>
    <Group w={148} left={3} label="Editing">
      <List $w={70}>
        <TextTool><Slot $w={15}><SigmaIcon /></Slot>AutoSum<Slot $w={12}><Caret /></Slot></TextTool>
        <TextTool><Slot $w={15}><FillIcon /></Slot>Fill<Slot $w={8}><Caret /></Slot></TextTool>
        <TextTool><Slot $w={15}><EraserIcon /></Slot>Clear<Slot $w={6}><Caret /></Slot></TextTool>
      </List>
      <Big $w={34}><SortIcon /><BigLine>Sort &amp;</BigLine><BigLine>Filter<Caret /></BigLine></Big>
      <Big $w={37}><FindIcon /><BigLine>Find &amp;</BigLine><BigLine>Select<Caret /></BigLine></Big>
    </Group>
    <Collapse aria-label="Collapse ribbon"><Icon w={7} h={5}><path d="M.5 4.500l3-3 3 3" stroke="#555" strokeWidth="1.300" /></Icon></Collapse>
  </Ribbon>
);

export default function App() {
  return (
    <Page>
      <Global />
      <TitleBar>
        <QuickAccess>
          <BarButton $w={12} aria-label="Save"><Icon w={11} h={11}><path d="M.5.500h10v10H.5zM2.500.5v4.500h6V.5M3 10.500V7.500h5v3M6.500 8v2" stroke="#fff" /></Icon></BarButton>
          <SplitButton>
            <BarButton $w={13} aria-label="Undo"><Icon w={13} h={11}><path d="M1.500 4H8c5 0 4.500 6 0 6M5 .5L1.500 4 5 7.500" stroke="#fff" strokeWidth="1.800" /></Icon></BarButton>
            <BarButton $w={5} aria-label="Undo list"><Caret c="#fff" /></BarButton>
          </SplitButton>
          <SplitButton>
            <BarButton $w={12} aria-label="Redo"><Icon w={12} h={11}><path d="M10.500 4H5C0 4 .5 10 5 10M7 .5L10.500 4 7 7.500" stroke="#4f9370" strokeWidth="1.500" /></Icon></BarButton>
            <BarButton $w={5} aria-label="Redo list"><Caret c="#4f9370" /></BarButton>
          </SplitButton>
          <BarButton $w={4} aria-label="Customize toolbar"><Icon w={4} h={6}><path d="M0 .5h4" stroke="#fff" /><path d="M0 3h4L2 6z" fill="#fff" /></Icon></BarButton>
        </QuickAccess>
        <Title>CG index calculation.xlsx - Excel</Title>
        <WindowButtons>
          <BarButton $w={23} aria-label="Ribbon display options"><Icon w={11} h={9}><path d="M.5.500h10v8H.5zM.5 2h10M5.500 8V3.500M3.500 5.500l2-2 2 2" stroke="#fff" /></Icon></BarButton>
          <BarButton $w={21} aria-label="Minimize"><Icon w={9} h={8}><path d="M0 7h9" stroke="#fff" strokeWidth="1.500" /></Icon></BarButton>
          <BarButton $w={22} aria-label="Restore"><Icon w={9} h={9}><path d="M.5 3.500h6v5h-6zM2.500 3V.5h6v5H7" stroke="#fff" /></Icon></BarButton>
          <BarButton $w={21} aria-label="Close"><Icon w={9} h={9}><path d="M.5.500l8 8M8.500.5l-8 8" stroke="#fff" strokeWidth="1.500" /></Icon></BarButton>
        </WindowButtons>
      </TitleBar>
      <Tabs>
        <Tab href="#" $file>File</Tab>
        <Tab href="#" $active>Home</Tab>
        {["Insert", "Page Layout", "Formulas", "Data", "Review", "View"].map((t) => <Tab key={t} href="#">{t}</Tab>)}
        <TellMe>
          <Icon w={9} h={13}><path d="M3 8.500C3 7 1 6.500 1 4.300a3.500 3.500 0 0 1 7 0C8 6.500 6 7 6 8.500zM3 10.500h3M3.500 12h2" stroke="#a5cbb4" /></Icon>
          <input aria-label="Tell me what you want to do" placeholder="Tell me what you want to do..." />
        </TellMe>
        <SignIn href="#">Sign in</SignIn>
        <Share><Icon w={13} h={13}><circle cx="6" cy="4" r="3.300" stroke="#fff" strokeWidth="1.200" /><path d="M.7 12.500C1 9 3 7.300 6 7.300M6 11h6M9 8v5" stroke="#fff" strokeWidth="1.200" /></Icon>Share</Share>
      </Tabs>
      <RibbonBar />
      <FormulaBar>
        <NameBox $w={84}><input aria-label="Name box" defaultValue="F1" /><Caret /></NameBox>
        <Grip $w={25}><Icon w={2} h={10}><path d="M1 0v10" stroke="#999" strokeWidth="1.500" strokeDasharray="2 2" /></Icon></Grip>
        <Box $w={91}>
          <Tool $w={28} aria-label="Cancel"><Icon w={11} h={10}><path d="M1 .5l9 9M10 .5l-9 9" stroke="#b8b8b8" strokeWidth="1.300" /></Icon></Tool>
          <Tool $w={32} aria-label="Enter"><Icon w={11} h={9}><path d="M.5 5l3 3L10.500.5" stroke="#b8b8b8" strokeWidth="1.600" /></Icon></Tool>
          <Tool $w={29} aria-label="Insert function"><Icon w={12} h={14}><path d="M8 1.200C6 .4 5.300 2 5 4L3.800 10C3.400 12.500 2.500 13.500.8 12.700M2.500 4.500h4.500" stroke="#444" strokeWidth="1.300" /><path d="M6.500 7.500c1.500-.5 2 4 3.500 3.700M10.800 7.500L6.300 11.500" stroke="#444" /></Icon></Tool>
        </Box>
        <FormulaInput><input aria-label="Formula" defaultValue="2018" /><Icon w={7} h={5}><path d="M.5.500l3 3 3-3" stroke="#555" strokeWidth="1.800" /></Icon></FormulaInput>
      </FormulaBar>
      <SheetArea>
        <Scroller><Sheet /></Scroller>
        <VScroll>
          <button aria-label="Scroll up"><Icon w={6} h={4}><path d="M0 4h6L3 0z" fill="#666" /></Icon></button>
          <VThumb />
          <button aria-label="Scroll down"><Icon w={6} h={4}><path d="M0 0h6L3 4z" fill="#666" /></Icon></button>
        </VScroll>
      </SheetArea>
      <SheetTabs>
        <SheetNav>
          <button aria-label="Previous sheet"><Icon w={4} h={6}><path d="M4 0v6L0 3z" fill="#bbb" /></Icon></button>
          <button aria-label="Next sheet"><Icon w={4} h={6}><path d="M0 0v6l4-3z" fill="#bbb" /></Icon></button>
        </SheetNav>
        <SheetTab href="#" $active>CG Index calculator</SheetTab>
        <SheetTab href="#">Sheet2</SheetTab>
        <TabsEnd>
          <button aria-label="New sheet"><Icon w={14} h={14}><circle cx="7" cy="7" r="6" stroke="#777" /><path d="M7 4v6M4 7h6" stroke="#777" /></Icon></button>
          <Grip $w={12}><Icon w={2} h={10}><path d="M1 0v10" stroke="#999" strokeWidth="1.500" strokeDasharray="2 2" /></Icon></Grip>
        </TabsEnd>
        <HScroll><button aria-label="Scroll left"><Icon w={4} h={6}><path d="M4 0v6L0 3z" fill="#666" /></Icon></button></HScroll>
      </SheetTabs>
      <Status>
        <span>Ready</span>
        <ViewButton $on aria-label="Normal view"><Icon w={9} h={9}><path d="M.5.500h8v8h-8zM.5 3.200h8M.5 5.800h8M3.200.5v8M5.800.5v8" stroke="#555" /></Icon></ViewButton>
        <ViewButton aria-label="Page layout view"><Icon w={9} h={9}><path d="M.5.500h8v8h-8zM2.500 2.500h4v6h-4z" stroke="#555" /></Icon></ViewButton>
        <ViewButton aria-label="Page break view"><Icon w={9} h={9}><path d="M.5.500h8v8h-8zM3.500.5v4h3v-4" stroke="#555" /></Icon></ViewButton>
        <Tool $w={12} aria-label="Zoom out"><Icon w={7} h={7}><path d="M0 3.500h7" stroke="#555" strokeWidth="1.500" /></Icon></Tool>
        <Zoom type="range" min={10} max={200} defaultValue={87} aria-label="Zoom" />
        <Tool $w={10} aria-label="Zoom in"><Icon w={7} h={7}><path d="M0 3.500h7M3.500 0v7" stroke="#555" strokeWidth="1.500" /></Icon></Tool>
        <ZoomLevel>87%</ZoomLevel>
      </Status>
      <Taskbar>
        <Wallpaper width="600" height="32" viewBox="0 0 600 32" fill="none" aria-hidden="true">
          <path d="M45 0h220v32H45z" fill="#544a35" />
          <path d="M50 6l60 4M60 14l70 6M90 4l50 18M120 2l50 20M150 20l40 8M165 6l50 14" stroke="#5f5643" strokeDasharray="1 3" strokeWidth="1.500" />
          <path d="M70 22l60 4M100 10l70 6M130 8l40 12M180 4l50 22M205 26l40-6" stroke="#5f5643" strokeDasharray="2 5" />
          <path d="M218 3l60 6M228 6l70-4M222 8l14 12M180 26l50-4M240 12l24 3" stroke="#7c7564" strokeDasharray="1 2" />
          <path d="M270 11l48-8 16-2 2 12-62 12z" fill="#6a6350" />
          <path d="M318 0h36l18 8v12l-6 12h-24z" fill="#625a47" />
          <path d="M378 8l50-4v10l-46 4z" fill="#544a35" />
          <path d="M278 18l50-8M345 6l8 20M358 12l-4 16" stroke="#50462f" strokeDasharray="3 3" />
          <path d="M418 0h42l18 32h-40l-16-14z" fill="#5f5643" />
          <path d="M430 5h28M436 11h26M446 17h18" stroke="#7c7564" strokeDasharray="1 2" />
          <path d="M458 0h6l14 28-5 3z" fill="#716a58" />
        </Wallpaper>
        <Watermark>www.ramadan-wallpapers.com</Watermark>
        <Apps>
          <AppButton $narrow aria-label="Start"><WindowsLogo /></AppButton>
          <AppButton aria-label="Internet Explorer"><IELogo /></AppButton>
          <AppButton $state="open" aria-label="File Explorer"><ExplorerLogo /></AppButton>
          <AppButton aria-label="Store"><StoreLogo /></AppButton>
          <AppButton aria-label="Firefox"><FirefoxLogo /></AppButton>
          <AppButton aria-label="Chrome"><ChromeLogo /></AppButton>
          <AppButton $state="front" aria-label="Excel"><ExcelLogo /></AppButton>
          <AppButton $state="faint" aria-label="Camtasia"><CamtasiaLogo /></AppButton>
        </Apps>
        <Tray>
          <TrayButton $w={24} aria-label="Hidden icons"><Icon w={6} h={4}><path d="M0 4h6L3 0z" fill="#fff" /></Icon></TrayButton>
          <TrayButton $w={20} aria-label="Dropbox"><Dropbox s={13} /></TrayButton>
          <TrayButton $w={20} aria-label="Action center"><Icon w={13} h={13}><path d="M1 0v13" stroke="#fff" strokeWidth="1.500" /><path d="M2 1h5v2h5l-1.500 2.500L12 8H6V6.500H2z" fill="#fff" /></Icon></TrayButton>
          <TrayButton $w={20} aria-label="Power"><Icon w={13} h={13}><path d="M2.500 4v8M.5 0v3.500h4V0M6.500 2.500h5v10h-5zM8 1h2" stroke="#fff" strokeWidth="1.300" /><path d="M7 8h4v4H7z" fill="#fff" /></Icon></TrayButton>
          <TrayButton $w={20} aria-label="Network"><Icon w={11} h={11}><path d="M1 11V9M3.500 11V7M6 11V4.500" stroke="#fff" strokeWidth="1.600" /><path d="M8.300 11V2.500M10.300 11V0" stroke="#b5b0a4" strokeWidth="1.500" /></Icon></TrayButton>
          <TrayButton $w={21} aria-label="Volume"><Icon w={13} h={13}><path d="M0 4h3l4-4v13L3 9H0z" fill="#fff" /><path d="M8.500 4.500c1 1 1 3 0 4M10.500 3c2 2 2 5 0 7" stroke="#c5c1b8" /></Icon></TrayButton>
          <Clock>6:30 PM<br />7/4/2020</Clock>
        </Tray>
      </Taskbar>
      <Pointer width="9" height="13" viewBox="0 0 9 13" fill="none" aria-hidden="true"><path d="M1 .8v10l2.400-2.300L5 12.300l1.500-.7L5 8.200h3.200z" fill="#fff" stroke="#333" strokeWidth=".8" /></Pointer>
      <DropboxBadge aria-label="Dropbox"><Dropbox s={19} /></DropboxBadge>
      <Recorder>
        <RecMenu>
          <span>Capture</span><span>Effects</span><span>Tools</span><span>Help</span>
          <RecWin>
            <button aria-label="Minimize recorder"><Icon w={7} h={7}><path d="M0 3.500h7" stroke="#b4bac3" /></Icon></button>
            <button aria-label="Close recorder"><Icon w={7} h={7}><path d="M0 0l7 7M7 0L0 7" stroke="#b4bac3" /></Icon></button>
          </RecWin>
        </RecMenu>
        <RecBody>
          <Panel $w={137}><h2>Duration</h2><Lcd>0:04:49</Lcd></Panel>
          <Panel $w={76}>
            <h2>Audio</h2>
            <Icon w={54} h={16}>
              <path d="M1.500 0v9M26.500 0v9M51.500 0v9" stroke="#464d5a" />
              <path d="M2 7l49-5v6H2z" fill="#2a2f3b" />
              <path d="M.5 9.500h52v4h-52z" stroke="#464d5a" />
              <path d="M0 10h8v3H0z" fill="#35e12c" />
              <path d="M18 8l2.500-4L23 8v7h-5z" fill="#b4bac3" />
            </Icon>
          </Panel>
          <RecButton $w={33}><Icon w={27} h={27}><path d="M5 13A10 10 0 1 1 8 21" stroke="#a7b0bb" strokeWidth="3" /><path d="M0 10.500h10.500L5.500 17z" fill="#a7b0bb" /></Icon>Delete</RecButton>
          <RecButton $w={42}><Icon w={27} h={27}><path d="M6 2h5v23H6zM16 2h5v23h-5z" fill="#a7b0bb" /></Icon>Pause</RecButton>
          <RecButton $w={34}><Icon w={27} h={27}><path d="M1 1h25v25H1z" fill="#a7b0bb" /></Icon>Stop</RecButton>
        </RecBody>
      </Recorder>
    </Page>
  );
}
